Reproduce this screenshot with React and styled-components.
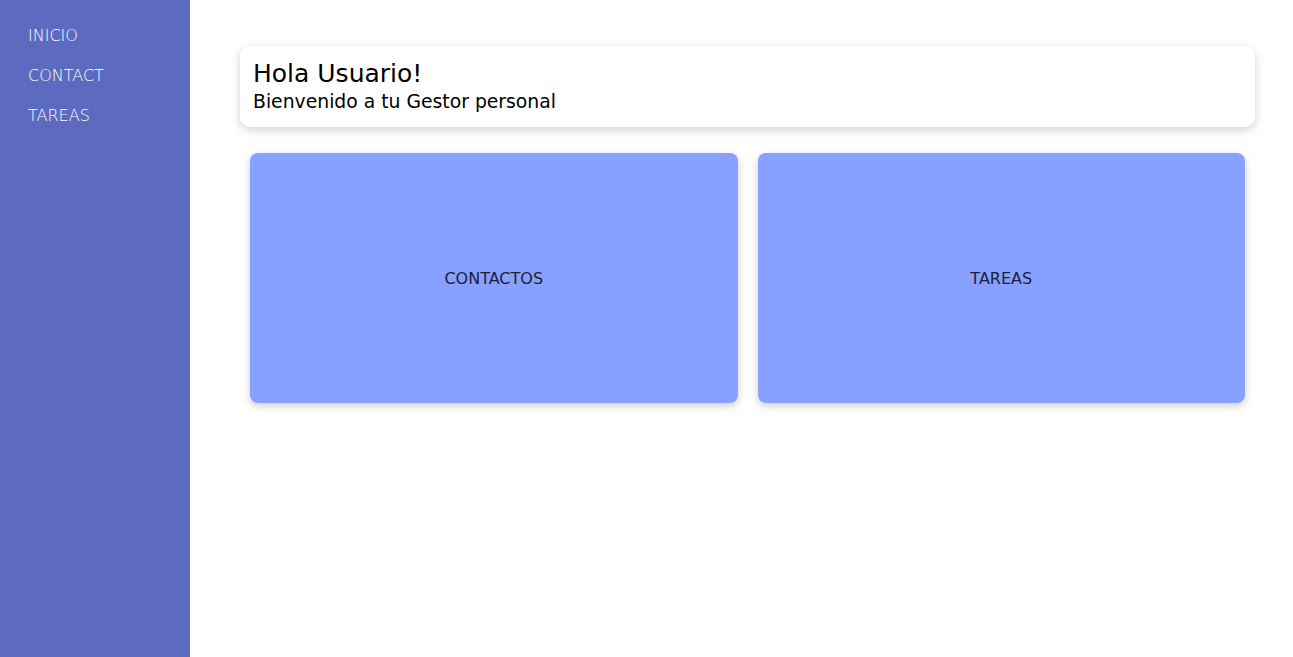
import React from 'react';
import styled, { createGlobalStyle } from 'styled-components';

const GlobalStyle = createGlobalStyle`
    html, body {
        margin: 0;
        padding: 0;
        height: 100%;
    }

    body {
        font-family: "DejaVu Sans", "Liberation Sans", sans-serif;
        background: #fff;
    }

    #root {
        height: 100%;
    }
`;

const Layout = styled.div`
    display: flex;
    height: 100vh;
`;

const Sidebar = styled.nav`
    width: 190px;
    flex-shrink: 0;
    background-color: #5c6bc0;
    padding: 25px 0 0 28px;
    box-sizing: border-box;
    display: flex;
    flex-direction: column;
    gap: 18px;
`;

const NavLink = styled.a`
    color: #ffffff;
    font-size: 16px;
    font-weight: 300;
    line-height: 22px;
    text-decoration: none;
    cursor: pointer;
`;

const Main = styled.main`
    flex: 1;
    padding: 46px 38px 0 50px;
`;

const Welcome = styled.div`
    background: #fff;
    border-radius: 10px;
    box-shadow: 0 3px 10px rgba(0, 0, 0, 0.18);
    padding: 13px 13px 12px;

    h1 {
        margin: 0;
        font-size: 25px;
        font-weight: 400;
        line-height: 30px;
        color: #000;
    }

    h2 {
        margin: 0;
        font-size: 18.8px;
        font-weight: 500;
        line-height: 26px;
        color: #000;
    }
`;

const Grid = styled.div`
    display: grid;
    grid-template-columns: 1fr 1fr;
    gap: 20px;
    margin: 26px 10px 0;
`;

const Card = styled.div`
    height: 250px;
    border-radius: 8px;
    background-color: #88a0ff;
    box-shadow: 0 3px 8px rgba(0, 0, 0, 0.2);
    display: flex;
    align-items: center;
    justify-content: center;
    color: #1c1f3a;
    font-size: 16px;
    cursor: pointer;
`;

export default function App() {
    return (
        <>
            <GlobalStyle />
            <Layout>
                <Sidebar>
                    <NavLink>INICIO</NavLink>
                    <NavLink>CONTACT</NavLink>
                    <NavLink>TAREAS</NavLink>
                </Sidebar>
                <Main>
                    <Welcome>
                        <h1>Hola Usuario!</h1>
                        <h2>Bienvenido a tu Gestor personal</h2>
                    </Welcome>
                    <Grid>
                        <Card>CONTACTOS</Card>
                        <Card>TAREAS</Card>
                    </Grid>
                </Main>
            </Layout>
        </>
    );
}
